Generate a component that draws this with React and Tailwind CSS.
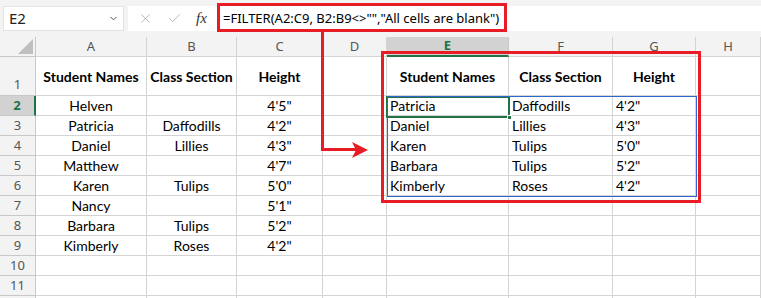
import React from 'react';
import { ChevronDown, X, Check } from 'lucide-react';

const COLS = ['A', 'B', 'C', 'D', 'E', 'F', 'G', 'H'];

const SOURCE = [
    ['Helven', '', `4'5"`],
    ['Patricia', 'Daffodills', `4'2"`],
    ['Daniel', 'Lillies', `4'3"`],
    ['Matthew', '', `4'7"`],
    ['Karen', 'Tulips', `5'0"`],
    ['Nancy', '', `5'1"`],
    ['Barbara', 'Tulips', `5'2"`],
    ['Kimberly', 'Roses', `4'2"`],
];

const SPILL = [
    ['Patricia', 'Daffodills', `4'2"`],
    ['Daniel', 'Lillies', `4'3"`],
    ['Karen', 'Tulips', `5'0"`],
    ['Barbara', 'Tulips', `5'2"`],
    ['Kimberly', 'Roses', `4'2"`],
];

const HEAD = ['Student Names', 'Class Section', 'Height'];

// what sits in a cell for a given row (1-based) and column index (0 = A)
const cellText = (row, col) => {
    if (row === 1) {
        if (col <= 2) return HEAD[col];
        if (col >= 4 && col <= 6) return HEAD[col - 4];
        return '';
    }
    if (col <= 2 && SOURCE[row - 2]) return SOURCE[row - 2][col];
    if (col >= 4 && col <= 6 && SPILL[row - 2]) return SPILL[row - 2][col - 4];
    return '';
};

const Cell = ({ row, col }) => {
    const text = cellText(row, col);
    const left = col >= 4 && col <= 6 && row > 1;
    return (
        <div
            className={`border-r border-b border-[#d4d4d4] bg-white flex overflow-hidden whitespace-nowrap text-[14px] text-black ${row === 1 ? 'items-end pb-[8px] font-bold' : 'items-center'} ${left ? 'justify-start pl-[3px]' : 'justify-center'}`}
        >
            {text}
        </div>
    );
};

const Sheet = () => {
    const rows = Array.from({ length: 12 }, (_, i) => i + 1);
    return (
        <div className="grid grid-cols-[36px_111px_90px_86px_64px_122px_104px_83px_1fr] grid-rows-[20px_39px_repeat(11,20px)]">
            {/* corner */}
            <div className="relative bg-[#f3f3f3] border-r border-b border-[#c8c8c8]">
                <svg className="absolute left-0 top-0" width="36" height="20">
                    <polygon points="33,2 33,17 18,17" fill="#bfbfbf" />
                </svg>
            </div>
            {COLS.map((c) => (
                <div
                    key={c}
                    className={`flex items-center justify-center text-[13px] font-['Noto_Sans',sans-serif] ${c === 'E' ? 'bg-[#d2d2d2] text-[#217346] font-bold border-b-2 border-b-[#217346] border-r border-r-[#c8c8c8]' : 'bg-[#f3f3f3] text-[#555] border-r border-b border-[#d4d4d4]'}`}
                >
                    {c}
                </div>
            ))}

            {rows.map((r) => (
                <React.Fragment key={r}>
                    <div
                        className={`flex justify-center text-[13px] font-['Noto_Sans',sans-serif] ${r === 1 ? 'items-end pb-[1px]' : 'items-center'} ${r === 2 ? 'bg-[#d2d2d2] text-[#217346] font-bold border-r-2 border-r-[#217346] border-b border-b-[#c8c8c8]' : 'bg-[#f3f3f3] text-[#555] border-r border-b border-[#c8c8c8]'}`}
                    >
                        {r < 12 ? r : ''}
                    </div>
                    {COLS.map((c, ci) => (
                        <Cell key={c} row={r} col={ci} />
                    ))}
                </React.Fragment>
            ))}
        </div>
    );
};

export default function App() {
    return (
        <div className="relative w-[761px] h-[298px] overflow-hidden bg-[#f3f3f3] font-['Lato',sans-serif]">
            {/* Formula bar */}
            <div className="flex h-[37px] pt-[6px] pl-[3px] pb-[6px] gap-[4px]">
                <div className="w-[121px] h-[25px] bg-white border border-[#e3e3e3] flex items-center justify-between pl-[5px] pr-[4px] text-[15px] text-[#222] font-['Noto_Sans',sans-serif]">
                    <span>E2</span>
                    <ChevronDown size={11} strokeWidth={2} className="text-[#444]" />
                </div>
                <div className="flex-1 h-[25px] bg-white flex items-center">
                    <div className="flex items-center gap-[14px] pl-[10px] w-[89px]">
                        <X size={15} strokeWidth={1.2} className="text-[#a0a0a0]" />
                        <Check size={15} strokeWidth={1.2} className="text-[#a0a0a0]" />
                        <span className="font-['Liberation_Serif',serif] italic text-[15px] text-[#333]">fx</span>
                    </div>
                    <span className="pl-[6px] text-[13px] text-black font-['Noto_Sans',sans-serif] whitespace-nowrap">
                        =FILTER(A2:C9, B2:B9&lt;&gt;"","All cells are blank")
                    </span>
                </div>
            </div>

            <Sheet />

            {/* E2 active cell */}
            <div className="absolute left-[386px] top-[96px] w-[124px] h-[22px] border-2 border-[#217346]" />
            <div className="absolute left-[507px] top-[115px] w-[5px] h-[5px] bg-[#217346] border border-white" />

            {/* spill range */}
            <div className="absolute left-[387px] top-[96px] w-[310px] h-[101px] border border-[#2e66c9] pointer-events-none" />

            {/* red callouts */}
            <div className="absolute left-[217px] top-[3px] w-[290px] h-[29px] border-[3px] border-[#e81c24]" />
            <div className="absolute left-[381px] top-[51px] w-[320px] h-[152px] border-[3px] border-[#e81c24]" />
            <svg className="absolute left-0 top-0" width="761" height="298">
                <path d="M322.5 32 V149.5 H356" stroke="#e81c24" strokeWidth="3" fill="none" />
                <polygon points="352,142 368,150 352,158 356,150" fill="#e81c24" />
            </svg>
        </div>
    );
}
